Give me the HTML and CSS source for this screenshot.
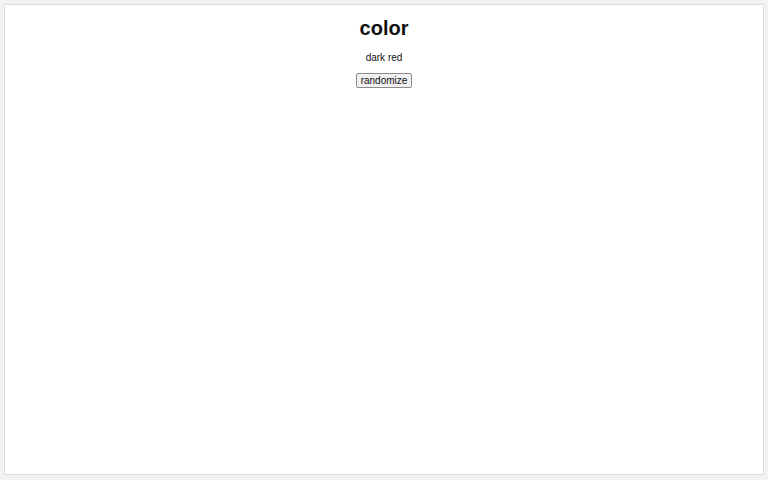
FILE: index.html
```html
<!DOCTYPE html>
<html lang="en">
<head>
    <meta charset="UTF-8">
    <title>color</title>
    <link rel="stylesheet" href="styles.css">
</head>
<body>
    <main class="panel">
        <h1 class="title">color</h1>
        <p class="color-name">dark red</p>
        <button class="randomize-btn">randomize</button>
    </main>
</body>
</html>
```

FILE: styles.css
```css
* {
    margin: 0;
    padding: 0;
    box-sizing: border-box;
}

body {
    font-family: 'Liberation Sans', Arial, sans-serif;
    background: #f2f2f2;
    padding: 4px;
    height: 480px;
}

.panel {
    background: #ffffff;
    border: 1px solid #dcdcdc;
    height: 471px;
    display: flex;
    flex-direction: column;
    align-items: center;
    padding-top: 12px;
}

.title {
    font-size: 20px;
    font-weight: 700;
    color: #111;
}

.color-name {
    font-size: 10px;
    margin-top: 12px;
    color: #111;
}

.randomize-btn {
    margin-top: 10px;
    font-family: 'Liberation Sans', Arial, sans-serif;
    font-size: 10px;
    padding: 1px 4px;
    background: #f0f0f0;
    border: 1px solid #8a8a8a;
    border-radius: 2px;
    color: #111;
}
```
